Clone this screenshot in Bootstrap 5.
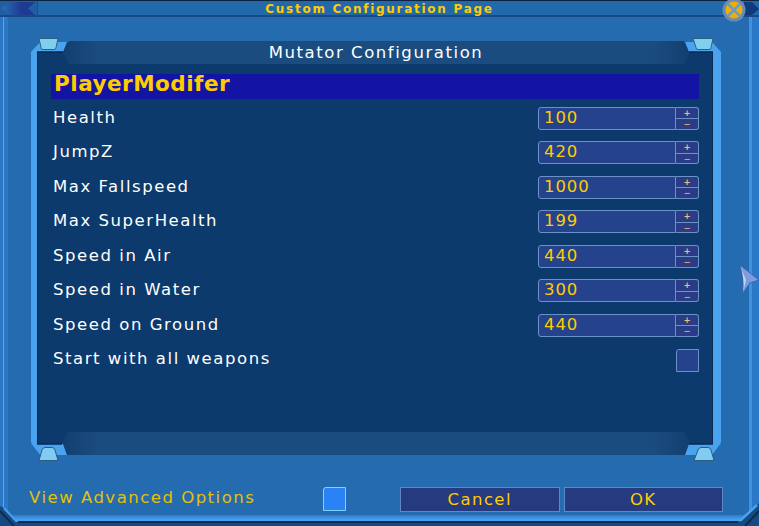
<!DOCTYPE html>
<html lang="en">
<head>
<meta charset="utf-8">
<title>Custom Configuration Page</title>
<link href="https://cdn.jsdelivr.net/npm/bootstrap@5.3.0/dist/css/bootstrap.min.css" rel="stylesheet">
<style>
html,body{height:526px;margin:0;overflow:hidden;background:#0a2240}
body{font-family:"DejaVu Sans",sans-serif;color:#fff}
.ut-app{width:759px;height:526px;position:relative;background:#246bb0}
.ut-top{height:17px;background:#2269ac;border-top:1px solid #0d2440;border-bottom:2px solid #174a86;font-size:12px;font-weight:700;letter-spacing:1.72px;color:#ffcc00;line-height:16px}
.ut-top-l{width:38px;height:14px;border-right:1px solid #174f90;background:#1f5ea0}
.ut-top-r{width:38px;height:14px}
.ut-title{padding-top:2px}
.ut-frame{height:509px;padding:24px 38px 0 31px;background:linear-gradient(90deg,#2a78c4 0 3px,#58a8f0 3px 4px,#2b78c8 4px 8px,#246bb0 8px calc(100% - 10px),#3f92e0 calc(100% - 10px) calc(100% - 7px),#2b78c8 calc(100% - 7px) 100%)}
.ut-pane{height:414px;background:#0c3a6c;border-left:6px solid #4aa3ef;border-right:8px solid #4aa3ef;box-shadow:inset 1px 0 0 #0a2a50,inset -1px 0 0 #0a2a50}
.ut-band{flex:0 0 23px;min-height:0;height:23px;overflow:hidden;margin:0 23px 0 25px;background:linear-gradient(90deg,#123f70 0,#1b4c7f 6%,#1b4c7f 94%,#123f70 100%);font-size:16.5px;letter-spacing:1.57px;line-height:24px;text-align:center;color:#fff;clip-path:polygon(5px 0,calc(100% - 5px) 0,100% 50%,calc(100% - 6px) 100%,7px 100%,0 50%)}
.ut-band-b{margin-top:auto}
.ut-head{height:25px;margin:10px 14px 0 14px;background:#1414a4;color:#ffcc00;font-size:21.5px;font-weight:700;letter-spacing:.5px;line-height:20px;padding-left:3px}
.ut-list{padding:7.75px 14px 0 16px}
.ut-row{height:34.5px;font-size:16.5px;letter-spacing:1.55px}
.ut-label{line-height:20px;padding-top:1px}
.ut-field{width:161px;height:23px;color:#ffcc00;font-size:16.5px;letter-spacing:.9px}
.ut-val{width:138px;background:#24438c;border:1px solid #6a92c6;border-radius:3px 0 0 3px;padding-left:5px;line-height:20px}
.ut-spin{width:23px;background:#2a3c86;border:1px solid #6a92c6;border-left:0;border-radius:0 3px 3px 0}
.ut-step{height:10.5px;font-size:8.5px;font-weight:700;line-height:10.5px;letter-spacing:0;text-align:center;color:#f5bc80}
.ut-step+.ut-step{border-top:1px solid #6a92c6;color:#e09a70}
.ut-check{width:23px;height:23px;margin-top:1px;background:#24438c;border:1px solid #6a92c6;border-radius:3px 0 0 0}
.ut-foot{height:70px;padding-top:19px}
.ut-adv{color:#e6c000;font-size:16.5px;letter-spacing:1.5px;line-height:20px;margin-left:-2px;width:294px;padding-bottom:4px}
.ut-box{width:23px;height:24px;background:#2a82f4;border:1px solid #7fd4ff;border-radius:3px 0 0 0;margin-bottom:1px}
.ut-btns{margin-right:-2px;gap:4px}
.ut-btn{width:159.5px;height:25px;padding:0;background:#263a80;border:1px solid #6288c4;border-radius:0;color:#ffcc00;font-size:16.5px;letter-spacing:1.4px;line-height:23px}
.ut-btn:hover{background:#263a80;color:#ffcc00;border-color:#6288c4}
.ut-abs{position:absolute;display:block}
.ut-base{position:absolute;left:0;right:0;bottom:0;height:11px;background:linear-gradient(#2f7cc8 0,#46a2f0 5px,#46a2f0 6px,#0c2c50 6px,#0c2c50 8px,#174a80 8px)}
</style>
</head>
<body>
<div class="ut-app">
  <div class="ut-top d-flex align-items-center">
    <div class="ut-top-l flex-shrink-0"></div>
    <div class="ut-title flex-grow-1 text-center">Custom Configuration Page</div>
    <div class="ut-top-r flex-shrink-0"></div>
  </div>
  <div class="ut-frame">
    <div class="ut-pane d-flex flex-column">
      <div class="ut-band">Mutator Configuration</div>
      <div class="ut-head">PlayerModifer</div>
      <div class="ut-list">
        <div class="ut-row d-flex justify-content-between"><span class="ut-label">Health</span><div class="ut-field d-flex"><div class="ut-val">100</div><div class="ut-spin d-flex flex-column"><div class="ut-step">+</div><div class="ut-step">−</div></div></div></div>
        <div class="ut-row d-flex justify-content-between"><span class="ut-label">JumpZ</span><div class="ut-field d-flex"><div class="ut-val">420</div><div class="ut-spin d-flex flex-column"><div class="ut-step">+</div><div class="ut-step">−</div></div></div></div>
        <div class="ut-row d-flex justify-content-between"><span class="ut-label">Max Fallspeed</span><div class="ut-field d-flex"><div class="ut-val">1000</div><div class="ut-spin d-flex flex-column"><div class="ut-step">+</div><div class="ut-step">−</div></div></div></div>
        <div class="ut-row d-flex justify-content-between"><span class="ut-label">Max SuperHealth</span><div class="ut-field d-flex"><div class="ut-val">199</div><div class="ut-spin d-flex flex-column"><div class="ut-step">+</div><div class="ut-step">−</div></div></div></div>
        <div class="ut-row d-flex justify-content-between"><span class="ut-label">Speed in Air</span><div class="ut-field d-flex"><div class="ut-val">440</div><div class="ut-spin d-flex flex-column"><div class="ut-step">+</div><div class="ut-step">−</div></div></div></div>
        <div class="ut-row d-flex justify-content-between"><span class="ut-label">Speed in Water</span><div class="ut-field d-flex"><div class="ut-val">300</div><div class="ut-spin d-flex flex-column"><div class="ut-step">+</div><div class="ut-step">−</div></div></div></div>
        <div class="ut-row d-flex justify-content-between"><span class="ut-label">Speed on Ground</span><div class="ut-field d-flex"><div class="ut-val">440</div><div class="ut-spin d-flex flex-column"><div class="ut-step">+</div><div class="ut-step">−</div></div></div></div>
        <div class="ut-row d-flex justify-content-between"><span class="ut-label">Start with all weapons</span><div class="ut-check"></div></div>
      </div>
      <div class="ut-band ut-band-b"></div>
    </div>
    <div class="ut-foot d-flex align-items-center">
      <span class="ut-adv">View Advanced Options</span>
      <span class="ut-box"></span>
      <span class="ut-btns d-flex ms-auto"><button type="button" class="btn ut-btn">Cancel</button><button type="button" class="btn ut-btn">OK</button></span>
    </div>
  </div>
  <div class="ut-base"></div>
  <svg class="ut-abs" style="left:29px;top:36px" width="40" height="18" viewBox="0 0 40 18"><path d="M0 0H40V6H11L2 17H0Z" fill="#246bb0"/><path d="M2 16 11 6H38L34 16H8V18H2Z" fill="#4aa3ef"/><path d="M8 16H34" stroke="#0a2a50" stroke-width="1.5"/><path d="M10 2.5H29L27 11.5Q27 13.5 25 13.5H14Q12 13.5 12 11.5Z" fill="#7fd0ee" stroke="#2f6080"/></svg>
  <svg class="ut-abs" style="left:684px;top:36px" width="39" height="18" viewBox="0 0 39 18"><path d="M39 0H0V6H28L37 17H39Z" fill="#246bb0"/><path d="M37 16 28 6H1L5 16H29V18H37Z" fill="#4aa3ef"/><path d="M5 16H29" stroke="#0a2a50" stroke-width="1.5"/><path d="M9 2.5H29L27 11.5Q27 13.5 25 13.5H14Q12 13.5 12 11.5Z" fill="#7fd0ee" stroke="#2f6080"/></svg>
  <svg class="ut-abs" style="left:29px;top:442px" width="40" height="20" viewBox="0 0 40 20"><path d="M0 0H2L11 13H40V14H0Z" fill="#246bb0"/><path d="M2 1 11 13H38L34 2H8V1Z" fill="#4aa3ef"/><path d="M8 2H33" stroke="#0a2a50" stroke-width="1.5"/><path d="M10 18.5H29L26 8Q25 5.5 23 5.5H16Q14 5.5 13 8Z" fill="#80ccf4" stroke="#2f5a7a"/></svg>
  <svg class="ut-abs" style="left:684px;top:442px" width="39" height="20" viewBox="0 0 39 20"><path d="M39 0H37L28 13H0V14H39Z" fill="#246bb0"/><path d="M37 1 28 13H1L5 2H29V1Z" fill="#4aa3ef"/><path d="M5 2H29" stroke="#0a2a50" stroke-width="1.5"/><path d="M10 18.5H30L27 8Q26 5.5 24 5.5H17Q15 5.5 14 8Z" fill="#80ccf4" stroke="#2f5a7a"/></svg>
  <svg class="ut-abs" style="left:0;top:506px" width="18" height="20" viewBox="0 0 18 20"><path d="M0 0 4 2V4L16 15H18V20H0Z" fill="#174a80"/><path d="M4 2 16 15H18" fill="none" stroke="#46a2f0" stroke-width="2"/><path d="M0 5 14 20" stroke="#0c2c50" stroke-width="2"/></svg>
  <svg class="ut-abs" style="left:738px;top:503px" width="21" height="23" viewBox="0 0 21 23"><path d="M21 0 3 18H0V23H21Z" fill="#174a80"/><path d="M19 2 3 17H0" fill="none" stroke="#46a2f0" stroke-width="2.5"/><path d="M21 8 7 23" stroke="#0c2c50" stroke-width="2"/></svg>
  <svg class="ut-abs" style="left:720px;top:0" width="39" height="22" viewBox="0 0 39 22"><path d="M24 2H32L39 9 32 15H24Z" fill="#0f3a7c"/><circle cx="14" cy="10" r="11.5" fill="#6a8cb4"/><circle cx="14" cy="10" r="8.5" fill="#eeb000"/><path d="M8 4 20 16M20 4 8 16" stroke="#6e9ac8" stroke-width="2.6"/></svg>
  <svg class="ut-abs" style="left:1px;top:1px" width="37" height="15" viewBox="0 0 37 15"><defs><linearGradient id="ut-g" x1="0" x2="1" y1="0" y2="0"><stop offset="0" stop-color="#2a70b8"/><stop offset=".6" stop-color="#1e3a92"/><stop offset="1" stop-color="#1e3a92"/></linearGradient></defs><path d="M0 7 9 1H34L27 7.5 34 14H9Z" fill="url(#ut-g)"/></svg>
  <svg class="ut-abs" style="left:740px;top:263px" width="19" height="31" viewBox="0 0 19 31"><path d="M0 2 19 17 10 20 3 30Q5 16 0 2Z" fill="#7d9be0" stroke="#3a5a9a" stroke-width=".8"/><path d="M0 2Q5 16 3 30L6 17Z" fill="#c6d2f2"/></svg>
</div>
<script src="https://cdn.jsdelivr.net/npm/bootstrap@5.3.0/dist/js/bootstrap.bundle.min.js"></script>
</body>
</html>
